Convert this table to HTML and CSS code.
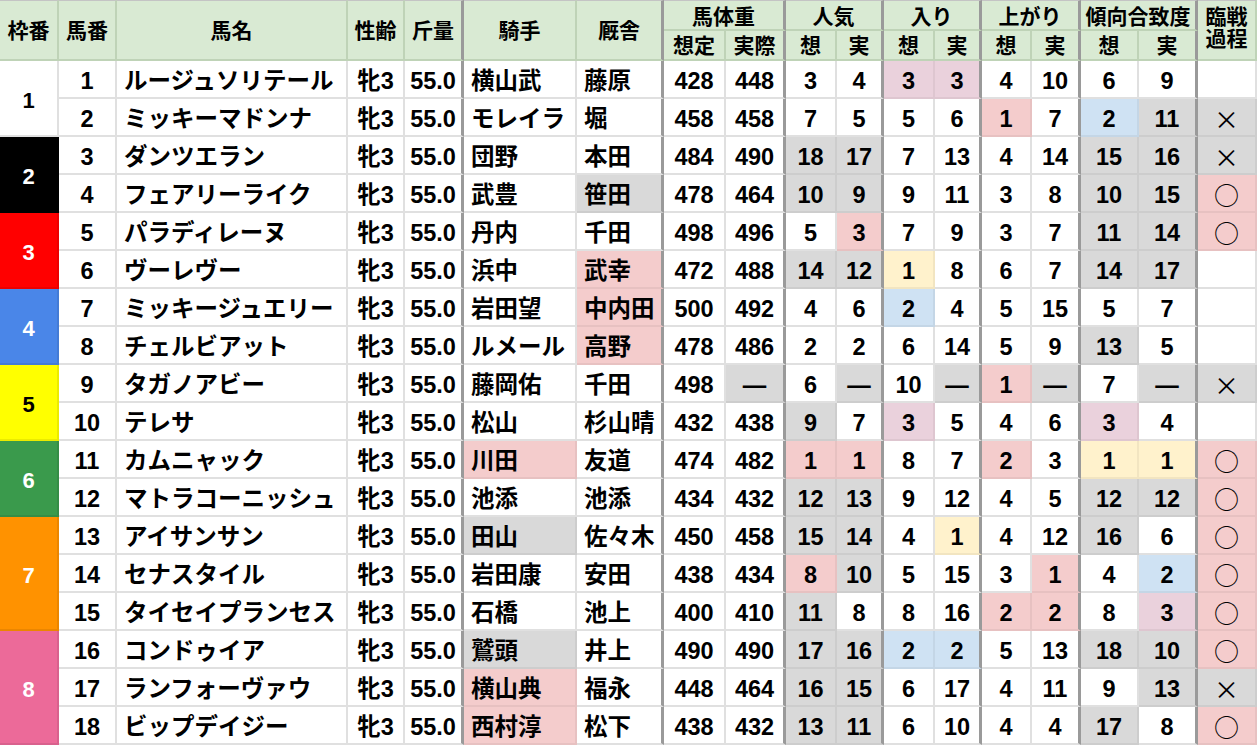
FILE: index.html
```html
<!DOCTYPE html>
<html lang="ja">
<head>
<meta charset="utf-8">
<title>出馬表</title>
<link rel="stylesheet" href="styles.css">
</head>
<body>
<div class="sheet">
  <div class="h s2">枠番</div>
  <div class="h s2">馬番</div>
  <div class="h s2">馬名</div>
  <div class="h s2">性齢</div>
  <div class="h s2 t">斤量</div>
  <div class="h s2">騎手</div>
  <div class="h s2 t">厩舎</div>
  <div class="h c2 t">馬体重</div>
  <div class="h c2 t">人気</div>
  <div class="h c2 t">入り</div>
  <div class="h c2 t">上がり</div>
  <div class="h c2 t">傾向合致度</div>
  <div class="h s2 two">臨戦<br>過程</div>
  <div class="h sub">想定</div><div class="h sub t">実際</div>
  <div class="h sub">想</div><div class="h sub t">実</div>
  <div class="h sub">想</div><div class="h sub t">実</div>
  <div class="h sub">想</div><div class="h sub t">実</div>
  <div class="h sub">想</div><div class="h sub t">実</div>

  <div class="r"><span class="fr f1">1</span><span>1</span><span>ルージュソリテール</span><span>牝3</span><span>55.0</span><span>横山武</span><span>藤原</span><span>428</span><span>448</span><span>3</span><span>4</span><span class="m">3</span><span class="m">3</span><span>4</span><span>10</span><span>6</span><span>9</span><span></span></div>
  <div class="r"><span>2</span><span>ミッキーマドンナ</span><span>牝3</span><span>55.0</span><span>モレイラ</span><span>堀</span><span>458</span><span>458</span><span>7</span><span>5</span><span>5</span><span>6</span><span class="p">1</span><span>7</span><span class="b">2</span><span class="g">11</span><span class="g o">×</span></div>

  <div class="r"><span class="fr f2">2</span><span>3</span><span>ダンツエラン</span><span>牝3</span><span>55.0</span><span>団野</span><span>本田</span><span>484</span><span>490</span><span class="g">18</span><span class="g">17</span><span>7</span><span>13</span><span>4</span><span>14</span><span class="g">15</span><span class="g">16</span><span class="g o">×</span></div>
  <div class="r"><span>4</span><span>フェアリーライク</span><span>牝3</span><span>55.0</span><span>武豊</span><span class="g">笹田</span><span>478</span><span>464</span><span class="g">10</span><span class="g">9</span><span>9</span><span>11</span><span>3</span><span>8</span><span class="g">10</span><span class="g">15</span><span class="p o">○</span></div>

  <div class="r"><span class="fr f3">3</span><span>5</span><span>パラディレーヌ</span><span>牝3</span><span>55.0</span><span>丹内</span><span>千田</span><span>498</span><span>496</span><span>5</span><span class="p">3</span><span>7</span><span>9</span><span>3</span><span>7</span><span class="g">11</span><span class="g">14</span><span class="p o">○</span></div>
  <div class="r"><span>6</span><span>ヴーレヴー</span><span>牝3</span><span>55.0</span><span>浜中</span><span class="p">武幸</span><span>472</span><span>488</span><span class="g">14</span><span class="g">12</span><span class="y">1</span><span>8</span><span>6</span><span>7</span><span class="g">14</span><span class="g">17</span><span></span></div>

  <div class="r"><span class="fr f4">4</span><span>7</span><span>ミッキージュエリー</span><span>牝3</span><span>55.0</span><span>岩田望</span><span class="p">中内田</span><span>500</span><span>492</span><span>4</span><span>6</span><span class="b">2</span><span>4</span><span>5</span><span>15</span><span>5</span><span>7</span><span></span></div>
  <div class="r"><span>8</span><span>チェルビアット</span><span>牝3</span><span>55.0</span><span>ルメール</span><span class="p">高野</span><span>478</span><span>486</span><span>2</span><span>2</span><span>6</span><span>14</span><span>5</span><span>9</span><span class="g">13</span><span>5</span><span></span></div>

  <div class="r"><span class="fr f5">5</span><span>9</span><span>タガノアビー</span><span>牝3</span><span>55.0</span><span>藤岡佑</span><span>千田</span><span>498</span><span class="g">—</span><span>6</span><span class="g">—</span><span>10</span><span class="g">—</span><span class="p">1</span><span class="g">—</span><span>7</span><span class="g">—</span><span class="g o">×</span></div>
  <div class="r"><span>10</span><span>テレサ</span><span>牝3</span><span>55.0</span><span>松山</span><span>杉山晴</span><span>432</span><span>438</span><span class="g">9</span><span>7</span><span class="m">3</span><span>5</span><span>4</span><span>6</span><span class="m">3</span><span>4</span><span></span></div>

  <div class="r"><span class="fr f6">6</span><span>11</span><span>カムニャック</span><span>牝3</span><span>55.0</span><span class="p">川田</span><span>友道</span><span>474</span><span>482</span><span class="p">1</span><span class="p">1</span><span>8</span><span>7</span><span class="p">2</span><span>3</span><span class="y">1</span><span class="y">1</span><span class="p o">○</span></div>
  <div class="r"><span>12</span><span>マトラコーニッシュ</span><span>牝3</span><span>55.0</span><span>池添</span><span>池添</span><span>434</span><span>432</span><span class="g">12</span><span class="g">13</span><span>9</span><span>12</span><span>4</span><span>5</span><span class="g">12</span><span class="g">12</span><span class="p o">○</span></div>

  <div class="r"><span class="fr f7 s3">7</span><span>13</span><span>アイサンサン</span><span>牝3</span><span>55.0</span><span class="g">田山</span><span>佐々木</span><span>450</span><span>458</span><span class="g">15</span><span class="g">14</span><span>4</span><span class="y">1</span><span>4</span><span>12</span><span class="g">16</span><span>6</span><span class="p o">○</span></div>
  <div class="r"><span>14</span><span>セナスタイル</span><span>牝3</span><span>55.0</span><span>岩田康</span><span>安田</span><span>438</span><span>434</span><span class="p">8</span><span class="g">10</span><span>5</span><span>15</span><span>3</span><span class="p">1</span><span>4</span><span class="b">2</span><span class="p o">○</span></div>
  <div class="r"><span>15</span><span>タイセイプランセス</span><span>牝3</span><span>55.0</span><span>石橋</span><span>池上</span><span>400</span><span>410</span><span class="g">11</span><span>8</span><span>8</span><span>16</span><span class="p">2</span><span class="p">2</span><span>8</span><span class="m">3</span><span class="p o">○</span></div>

  <div class="r"><span class="fr f8 s3">8</span><span>16</span><span>コンドゥイア</span><span>牝3</span><span>55.0</span><span class="g">鷲頭</span><span>井上</span><span>490</span><span>490</span><span class="g">17</span><span class="g">16</span><span class="b">2</span><span class="b">2</span><span>5</span><span>13</span><span class="g">18</span><span class="g">10</span><span class="p o">○</span></div>
  <div class="r"><span>17</span><span>ランフォーヴァウ</span><span>牝3</span><span>55.0</span><span class="p">横山典</span><span>福永</span><span>448</span><span>464</span><span class="g">16</span><span class="g">15</span><span>6</span><span>17</span><span>4</span><span>11</span><span>9</span><span class="g">13</span><span class="g o">×</span></div>
  <div class="r"><span>18</span><span>ビップデイジー</span><span>牝3</span><span>55.0</span><span class="p">西村淳</span><span>松下</span><span>438</span><span>432</span><span class="g">13</span><span class="g">11</span><span>6</span><span>10</span><span>4</span><span>4</span><span class="g">17</span><span>8</span><span class="p o">○</span></div>
</div>
</body>
</html>
```

FILE: styles.css
```css
html, body {
  margin: 0;
  padding: 0;
  background: #ffffff;
}

body {
  font-family: "Liberation Sans", "Noto Sans CJK JP", sans-serif;
  font-weight: 700;
  color: #000000;
}

.sheet {
  display: grid;
  width: 1257px;
  grid-template-columns: 59px 58px 231px 57px 59px 113px 87px 62px 60px 51px 47px 51px 47px 50px 49px 58px 59px 59px;
  grid-template-rows: 31px 30px repeat(18, 38px);
}

/* header */
.h {
  box-sizing: border-box;
  display: flex;
  align-items: center;
  justify-content: center;
  background: #d9ead3;
  border-right: 2px solid #bfd3b7;
  border-bottom: 2px solid #bfd3b7;
  font-size: 21px;
  line-height: 1;
  white-space: nowrap;
}

.h.s2 {
  grid-row: span 2;
  border-top: 1px solid #c4c4c4;
}

.h.c2 {
  grid-column: span 2;
  border-top: 1px solid #c4c4c4;
  padding-top: 2px;
}

.h.t {
  border-right: 3px solid #9a9a9a;
}

.h.two {
  text-align: center;
  line-height: 1.05;
  padding-bottom: 4px;
}

.h.sub {
  padding-top: 1px;
}

/* body rows */
.r {
  display: contents;
}

.r > span {
  box-sizing: border-box;
  display: flex;
  align-items: center;
  justify-content: center;
  border-right: 2px solid #e0e0e0;
  border-bottom: 2px solid #e0e0e0;
  font-size: 23.5px;
  line-height: 1;
  white-space: nowrap;
  overflow: hidden;
  padding-top: 5px;
}

.r > span:nth-last-child(16),
.r > span:nth-last-child(13),
.r > span:nth-last-child(12) {
  justify-content: flex-start;
  padding-left: 7px;
}

.r > .g { background: #d9d9d9; border-color: rgba(0, 0, 0, 0.05); }
.r > .p { background: #f4cccc; border-color: rgba(0, 0, 0, 0.05); }
.r > .m { background: #ead1dc; border-color: rgba(0, 0, 0, 0.05); }
.r > .b { background: #cfe2f3; border-color: rgba(0, 0, 0, 0.05); }
.r > .y { background: #fff2cc; border-color: rgba(0, 0, 0, 0.05); }

.r > span:nth-last-child(2n+2):nth-last-child(-n+14) {
  border-right: 3px solid #9a9a9a;
}

.r > .o {
  font-family: "Noto Sans CJK JP", sans-serif;
  font-weight: 400;
  font-size: 25px;
  padding-top: 2px;
}

/* frame numbers */
.r > .fr {
  grid-row: span 2;
  font-size: 22px;
  color: #ffffff;
  border-color: rgba(0, 0, 0, 0.08);
}

.r > .fr.s3 {
  grid-row: span 3;
}

.r > .f1 { background: #ffffff; color: #000000; border-color: #e0e0e0; }
.r > .f2 { background: #000000; }
.r > .f3 { background: #ff0000; }
.r > .f4 { background: #4a86e8; }
.r > .f5 { background: #ffff00; color: #000000; }
.r > .f6 { background: #3a9a4c; }
.r > .f7 { background: #ff9200; }
.r > .f8 { background: #ec6a99; }
```
